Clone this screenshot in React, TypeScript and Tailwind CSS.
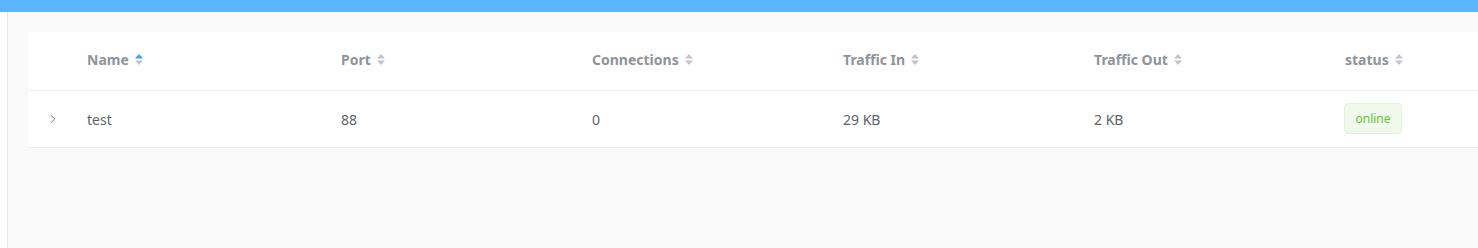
import { ChevronRight } from 'lucide-react';

interface ProxyRow {
    name: string;
    port: string;
    connections: string;
    trafficIn: string;
    trafficOut: string;
    status: string;
}

const rows: ProxyRow[] = [
    {
        name: 'test',
        port: '88',
        connections: '0',
        trafficIn: '29 KB',
        trafficOut: '2 KB',
        status: 'online'
    }
];

const columns = [
    { label: 'Name', width: 'w-[254px]', active: true },
    { label: 'Port', width: 'w-[251px]', active: false },
    { label: 'Connections', width: 'w-[251px]', active: false },
    { label: 'Traffic In', width: 'w-[251px]', active: false },
    { label: 'Traffic Out', width: 'w-[251px]', active: false },
    { label: 'status', width: 'flex-1', active: false }
];

function SortCaret({ active }: { active: boolean }) {
    return (
        <svg width="10" height="13" viewBox="0 0 10 13" className="ml-[5px]">
            <path d="M1 5.5 L5 1 L9 5.5 Z" fill={active ? '#409eff' : '#c0c4cc'} />
            <path d="M1 7.5 L5 12 L9 7.5 Z" fill="#c0c4cc" />
        </svg>
    );
}

export default function App() {
    return (
        <div className="h-[248px] w-[1478px] overflow-hidden bg-white font-['Noto_Sans',sans-serif]">
            {/* top bar */}
            <div className="h-[12px] bg-[#5ab6fe]" />

            <div className="flex h-[236px]">
                <div className="w-[7px] bg-white" />
                <div className="w-px bg-[#e6e6e6]" />

                {/* content */}
                <div className="flex-1 bg-[#f9f9f9] pl-[20px] pt-[20px]">
                    <div className="bg-white">
                        {/* header */}
                        <div className="flex h-[59px] items-center border-b border-[#ebeef5] pb-[4px]">
                            <div className="w-[59px]" />
                            {columns.map((col) => (
                                <div
                                    key={col.label}
                                    className={`${col.width} flex items-center text-[14px] font-bold text-[#909399]`}
                                >
                                    <span>{col.label}</span>
                                    <SortCaret active={col.active} />
                                </div>
                            ))}
                        </div>

                        {/* body */}
                        {rows.map((row) => (
                            <div
                                key={row.name}
                                className="flex h-[57px] items-center border-b border-[#ebeef5] text-[14px] text-[#606266]"
                            >
                                <div className="flex w-[59px] pl-[18px]">
                                    <ChevronRight size={14} strokeWidth={1.4} className="text-[#606266]" />
                                </div>
                                <div className="w-[254px]">{row.name}</div>
                                <div className="w-[251px]">{row.port}</div>
                                <div className="w-[251px]">{row.connections}</div>
                                <div className="w-[251px]">{row.trafficIn}</div>
                                <div className="w-[251px]">{row.trafficOut}</div>
                                <div className="flex-1 pb-[1px]">
                                    <span className="-ml-px inline-flex h-[31px] w-[58px] items-center justify-center rounded-[4px] border border-[#e1f3d8] bg-[#f0f9eb] text-[12px] text-[#67c23a]">
                                        {row.status}
                                    </span>
                                </div>
                            </div>
                        ))}
                    </div>
                </div>
            </div>
        </div>
    );
}
